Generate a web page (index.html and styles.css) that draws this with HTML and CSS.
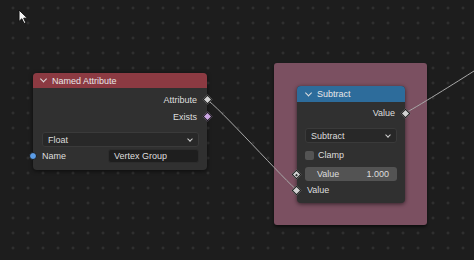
FILE: index.html
```html
<!DOCTYPE html>
<html>
<head>
<meta charset="utf-8">
<link rel="stylesheet" href="styles.css">
</head>
<body>
<div class="canvas">
  <div class="frame"></div>

  <svg class="links" width="474" height="260" viewBox="0 0 474 260">
    <path d="M207 100 C 214 102, 290 186, 297 190" />
    <path d="M405 113 C 412 110, 460 80, 474 71" />
  </svg>

  <div class="node node-attr">
    <div class="node-head head-red">
      <span class="chev"></span><span>Named Attribute</span>
    </div>
    <div class="node-body body-attr">
      <div class="row out">Attribute<span class="sock diamond grey"></span></div>
      <div class="row out">Exists<span class="sock diamond lilac"></span></div>
      <div class="select">Float<span class="caret"></span></div>
      <div class="row in name-row">
        <span class="sock circle blue"></span>
        <span class="lbl">Name</span>
        <span class="text-field">Vertex Group</span>
      </div>
    </div>
  </div>

  <div class="node node-sub">
    <div class="node-head head-blue">
      <span class="chev"></span><span>Subtract</span>
    </div>
    <div class="node-body body-sub">
      <div class="row out">Value<span class="sock diamond grey"></span></div>
      <div class="select">Subtract<span class="caret"></span></div>
      <div class="check-row"><span class="checkbox"></span>Clamp</div>
      <div class="num-field">
        <span class="sock field-sock"></span>
        <span>Value</span><span>1.000</span>
      </div>
      <div class="row in"><span class="sock diamond grey"></span>Value</div>
    </div>
  </div>

  <svg class="cursor" width="12" height="16" viewBox="0 0 12 16">
    <path d="M1 1 L1 12.5 L3.8 9.8 L6 14.5 L7.8 13.7 L5.7 9.2 L9.5 9.2 Z" fill="#f4f4f4" stroke="#111" stroke-width="1" stroke-linejoin="round"/>
  </svg>
</div>
</body>
</html>
```

FILE: styles.css
```css
* { box-sizing: border-box; }
html, body { margin: 0; padding: 0; }
body {
  width: 474px;
  height: 260px;
  overflow: hidden;
  background: #1d1d1d;
  font-family: "Liberation Sans", Arial, sans-serif;
  font-size: 9px;
  color: #dedede;
}
.canvas {
  position: relative;
  width: 474px;
  height: 260px;
  background-color: #1d1d1d;
  background-image: radial-gradient(circle, #3a3a3a 0.9px, transparent 1.3px);
  background-size: 15px 15px;
  background-position: 5.5px 0.5px;
}
.frame {
  position: absolute;
  left: 274px;
  top: 63px;
  width: 153px;
  height: 162px;
  background: #7b5061;
  border-radius: 3px;
  box-shadow: 0 2px 3px rgba(0,0,0,0.55);
}
.links {
  position: absolute;
  left: 0;
  top: 0;
}
.links path {
  fill: none;
  stroke: #a8a8a8;
  stroke-width: 1;
}
.node {
  position: absolute;
  background: #303030;
  border-radius: 4px;
  box-shadow: 0 1px 4px rgba(0,0,0,0.6);
  display: flex;
  flex-direction: column;
}
.node-attr { left: 33px; top: 73px; width: 174px; height: 97px; }
.node-sub { left: 297px; top: 86px; width: 108px; height: 117px; }
.node-head {
  display: flex;
  align-items: center;
  gap: 5px;
  padding-left: 8px;
  border-radius: 4px 4px 0 0;
  color: #e8e8e8;
}
.head-red { height: 15px; background: #8c3a42; }
.head-blue { height: 16px; background: #2d6c9b; padding-left: 9px; }
.chev {
  width: 5px;
  height: 5px;
  border-right: 1px solid #e0e0e0;
  border-bottom: 1px solid #e0e0e0;
  transform: translateY(-1.5px) rotate(45deg);
  margin-right: 1px;
}
.node-body {
  position: relative;
  display: flex;
  flex-direction: column;
  padding: 0 8px;
}
.body-attr { padding-top: 3px; }
.body-sub { padding-top: 3px; }
.row {
  position: relative;
  display: flex;
  align-items: center;
}
.row.out { justify-content: flex-end; padding-right: 2px; }
.body-attr .row.out { height: 17px; }
.body-sub .row.out { height: 16px; }
.sock {
  position: absolute;
  display: block;
}
.diamond {
  width: 7px;
  height: 7px;
  transform: rotate(45deg);
  border: 1px solid #1b1b1b;
}
.row.out .diamond { right: -12px; top: 50%; margin-top: -3.5px; }
.grey { background: #d2d2d2; }
.lilac { background: #cba6e3; }
.circle {
  width: 8px;
  height: 8px;
  border-radius: 50%;
  border: 1px solid #1b1b1b;
}
.blue { background: #5b9ce6; }
.select {
  height: 15px;
  margin-top: 7px;
  display: flex;
  align-items: center;
  justify-content: space-between;
  padding: 0 4px 0 5px;
  background: #282828;
  border: 1px solid #3a3a3a;
  border-radius: 3px;
  color: #dcdcdc;
}
.caret {
  width: 4px;
  height: 4px;
  border-right: 1px solid #d0d0d0;
  border-bottom: 1px solid #d0d0d0;
  transform: translateY(-1px) rotate(45deg);
  margin-right: 2px;
}
.body-attr .select { margin-left: 1px; }
.name-row {
  height: 15px;
  margin-top: 4px;
}
.name-row .circle { left: -12px; top: 50%; margin-top: -4px; }
.lbl { margin-left: 1px; width: 66px; }
.text-field {
  flex: 1;
  height: 14px;
  display: flex;
  align-items: center;
  padding-left: 5px;
  background: #1e1e1e;
  border: 1px solid #2c2c2c;
  border-radius: 3px;
}
.check-row {
  height: 12px;
  margin-top: 6px;
  display: flex;
  align-items: center;
  gap: 4px;
}
.checkbox {
  width: 9px;
  height: 9px;
  background: #545454;
  border-radius: 2px;
}
.num-field {
  position: relative;
  height: 14px;
  margin-top: 6px;
  display: flex;
  align-items: center;
  justify-content: space-between;
  padding: 0 8px 0 12px;
  background: #535353;
  border-radius: 3px;
}
.field-sock {
  left: -12px;
  top: 50%;
  margin-top: -3.5px;
  width: 7px;
  height: 7px;
  transform: rotate(45deg);
  background: #d2d2d2;
  border: 1px solid #1b1b1b;
}
.field-sock::after {
  content: "";
  position: absolute;
  left: 1.5px;
  top: 1.5px;
  width: 2px;
  height: 2px;
  background: #303030;
}
.row.in { height: 14px; margin-top: 2px; }
.body-sub .row.in .diamond { left: -12px; top: 50%; margin-top: -3.5px; }
.body-sub .row.in { padding-left: 2px; }
.cursor {
  position: absolute;
  left: 18px;
  top: 9px;
}
```
